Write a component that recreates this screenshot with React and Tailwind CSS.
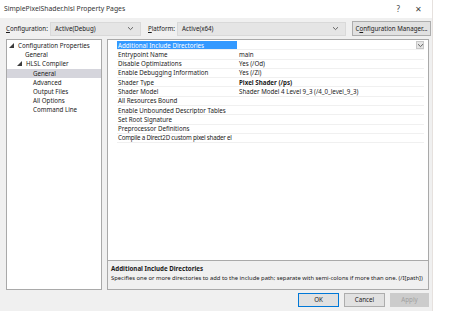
import { useState } from 'react';

const tree = [
  { label: 'Configuration Properties', indent: 0, arrow: true },
  { label: 'General', indent: 1 },
  { label: 'HLSL Compiler', indent: 1, arrow: true },
  { label: 'General', indent: 2, selected: true },
  { label: 'Advanced', indent: 2 },
  { label: 'Output Files', indent: 2 },
  { label: 'All Options', indent: 2 },
  { label: 'Command Line', indent: 2 },
];

const props = [
  { name: 'Additional Include Directories', value: '' },
  { name: 'Entrypoint Name', value: 'main' },
  { name: 'Disable Optimizations', value: 'Yes (/Od)' },
  { name: 'Enable Debugging Information', value: 'Yes (/Zi)' },
  { name: 'Shader Type', value: 'Pixel Shader (/ps)', bold: true },
  { name: 'Shader Model', value: 'Shader Model 4 Level 9_3 (/4_0_level_9_3)' },
  { name: 'All Resources Bound', value: '' },
  { name: 'Enable Unbounded Descriptor Tables', value: '' },
  { name: 'Set Root Signature', value: '' },
  { name: 'Preprocessor Definitions', value: '' },
  { name: 'Compile a Direct2D custom pixel shader el', value: '', tight: true },
];

function Chevron() {
  return (
    <svg width="7" height="5" viewBox="0 0 7 5" className="text-[#555] shrink-0">
      <path d="M1 1.2 L3.5 3.6 L6 1.2" fill="none" stroke="currentColor" strokeWidth="0.9" />
    </svg>
  );
}

function Select({ value, className }) {
  return (
    <div className={`h-[14px] shrink-0 flex items-center justify-between border border-[#d9d9d9] bg-[#e5e5e5] pl-[4px] pr-[6px] ${className}`}>
      <span className="whitespace-nowrap">{value}</span>
      <Chevron />
    </div>
  );
}

function Triangle() {
  return (
    <svg width="5" height="5" viewBox="0 0 5 5" className="mr-[4px] shrink-0">
      <path d="M5 0 L5 5 L0 5 Z" fill="#3c3c3c" />
    </svg>
  );
}

export default function App() {
  const [selected] = useState(0);

  return (
    <div className="w-[474px] h-[311px] bg-white flex" style={{ fontFamily: '"Noto Sans", sans-serif' }}>
      <div className="w-[433px] shrink-0 h-[311px] bg-[#f0f0f0] flex flex-col text-[6.2px] text-[#1a1a1a] border-r border-[#e6e1de]">
        <div className="h-[18px] bg-white flex items-center justify-between pl-[4px] pr-[10px]">
          <span className="text-[6.8px] text-[#333] whitespace-nowrap">SimplePixelShader.hlsl Property Pages</span>
          <div className="flex items-center gap-[15px] text-[8px] text-[#444]">
            <span>?</span>
            <span>✕</span>
          </div>
        </div>

        <div className="h-[21px] flex items-center pl-[6px] pr-[4px] whitespace-nowrap">
          <span className="w-[44px] shrink-0"><u>C</u>onfiguration:</span>
          <Select value="Active(Debug)" className="w-[91px]" />
          <span className="ml-[7px] w-[29px] shrink-0"><u>P</u>latform:</span>
          <Select value="Active(x64)" className="w-[169px]" />
          <div className="ml-[6px] h-[15px] w-[79px] shrink-0 flex items-center justify-center border border-[#adadad] bg-[#e1e1e1]">
            <span>C<u>o</u>nfiguration Manager...</span>
          </div>
        </div>

        <div className="flex flex-1 pl-[6px] pr-[3px] gap-[5px]">
          <div className="w-[96px] shrink-0 h-[251px] bg-white border border-[#a9a9a9] pt-[1px]">
            {tree.map((t, i) => (
              <div
                key={i}
                className={`h-[9.2px] flex items-center whitespace-nowrap ${t.selected ? 'bg-[#d5d5dc]' : ''}`}
                style={{ paddingLeft: 2 + t.indent * 8 + (t.arrow ? 0 : 8) }}
              >
                {t.arrow && <Triangle />}
                <span>{t.label}</span>
              </div>
            ))}
          </div>

          <div className="flex-1 min-w-0 flex flex-col">
            <div className="h-[222px] bg-white border border-[#a9a9a9] pl-[9px] pt-[1px] pr-[4px]">
              {props.map((p, i) => (
                <div key={i} className="h-[9.3px] flex items-center border-b border-[#f0f0f0]">
                  <div className={`w-[120px] shrink-0 h-full flex items-center pl-[1px] overflow-hidden ${i === selected ? 'bg-[#3399ff] text-white' : ''}`}>
                    <span className={`whitespace-nowrap ${p.tight ? 'tracking-[-0.22px]' : ''}`}>{p.name}</span>
                  </div>
                  <div className={`flex-1 h-full flex items-center justify-between pl-[2px] ${p.bold ? 'font-bold' : ''}`}>
                    <span className="whitespace-nowrap">{p.value}</span>
                    {i === selected && (
                      <div className="h-[8px] w-[8px] flex items-center justify-center border border-[#c8c8c8] bg-[#e5e5e5]">
                        <Chevron />
                      </div>
                    )}
                  </div>
                </div>
              ))}
            </div>
            <div className="h-[29px] border border-t-0 border-[#a9a9a9] px-[3px] pt-[3px] bg-[#f0f0f0]">
              <div className="font-bold">Additional Include Directories</div>
              <div className="mt-[1px] whitespace-nowrap text-[5.85px]">
                Specifies one or more directories to add to the include path; separate with semi-colons if more than one. (/I[path])
              </div>
            </div>
          </div>
        </div>

        <div className="h-[20px] flex items-center justify-end gap-[5px] pr-[3px] pb-[2px]">
          <div className="h-[14px] w-[41px] flex items-center justify-center border border-[#0078d7] bg-[#e1e1e1]">OK</div>
          <div className="h-[14px] w-[41px] flex items-center justify-center border border-[#adadad] bg-[#e1e1e1]">Cancel</div>
          <div className="h-[14px] w-[39px] flex items-center justify-center border border-[#cccccc] bg-[#cccccc] text-[#a0a0a0]">Apply</div>
        </div>
      </div>
    </div>
  );
}
